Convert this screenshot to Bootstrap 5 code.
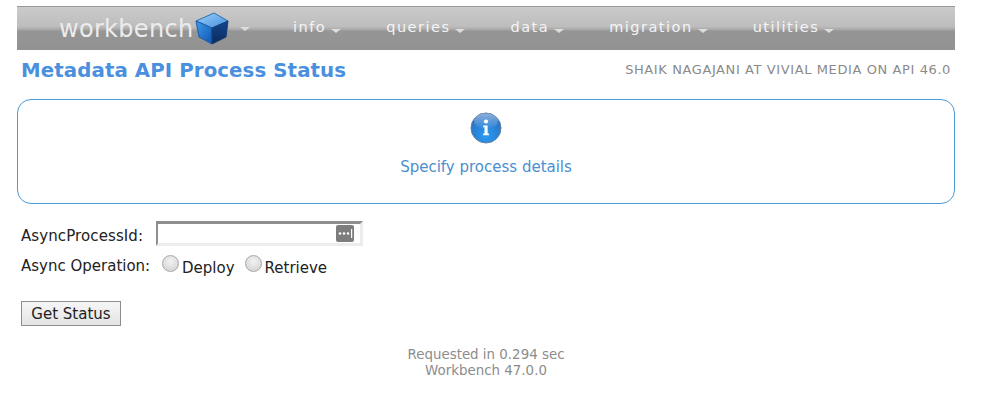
<!DOCTYPE html>
<html lang="en">
<head>
<meta charset="utf-8">
<title>Metadata API Process Status</title>
<link rel="stylesheet" href="https://cdn.jsdelivr.net/npm/bootstrap@5.3.0/dist/css/bootstrap.min.css">
<style>
body{font-family:"DejaVu Sans",Verdana,sans-serif;background:#fff;color:#222;font-size:15px;}
.page-wrap{width:938px;margin-left:17px;padding-top:6px;}
.wb-bar{height:44px;border-top:1px solid #999;background:linear-gradient(#cbcbcb 0,#bdbdbd 45%,#aaa 52%,#959595 56%,#929292 100%);color:#fff;align-items:center;}
.wb-brand{font-size:24px;letter-spacing:.3px;color:#ececec;margin-left:42px;width:135px;white-space:nowrap;line-height:1;}
.wb-cube{margin-right:10px;flex:none;}
.wb-item{font-size:14.5px;letter-spacing:1.5px;color:#f4f4f4;white-space:nowrap;position:relative;top:-1px;}
.wb-caret{display:inline-block;width:0;height:0;border-left:5px solid transparent;border-right:5px solid transparent;border-top:4px solid #ddd;margin-left:5px;vertical-align:-1px;}
.wb-caret-first{margin-left:0;}
.i-info{margin-left:43px;}.i-queries{margin-left:45px;}.i-data{margin-left:45px;}.i-mig{margin-left:45px;}.i-util{margin-left:45px;}
.head-row{height:49px;padding:0 4px 8px;align-items:center;}
.page-title{font-size:19.75px;font-weight:700;color:#4a90df;margin:0;letter-spacing:.1px;}
.user-line{font-size:13px;letter-spacing:.6px;color:#8a8a8a;text-transform:uppercase;position:relative;top:-1px;}
.msg-box{height:105px;border:1px solid #4a9ad4;border-radius:14px;padding-top:12px;text-align:center;color:#4a8fd0;font-size:15px;}
.msg-box svg{display:block;margin:0 auto 12px;}
.form-zone{padding:17px 0 0 4px;}
.lbl-a{width:135px;letter-spacing:.1px;margin:0;padding-top:5px;line-height:20px;}
.fake-input{position:relative;width:207px;height:25px;border:3px solid;border-color:#8e8e8e #ececec #ececec #8e8e8e;border-width:3px 3px 3px 2px;background:#fff;display:block;padding:0;outline:0;}
.key-btn{position:absolute;right:6px;top:1px;}
.radio-mock{appearance:none;width:17px;height:17px;border-radius:50%;border:1px solid #a8a8a8;background:radial-gradient(circle at 50% 35%,#f2f2f2,#cfcfcf);margin:0 3px 0 0;flex:none;position:relative;top:-3px;}
.lbl-b{width:141px;line-height:20px;}
.row-b{margin-top:8px;height:24px;}
.rad-item{margin-right:10px;align-items:center;}
.rad-text{position:relative;top:2px;}
.get-btn{margin-top:23px;width:100px;height:25px;padding:1px 0 0;font-size:15px;color:#222;border:1px solid #8e8e8e;border-radius:0;background:linear-gradient(#f6f6f6,#e4e4e4);display:block;}
.foot-txt{margin-top:21px;text-align:center;color:#8c8c8c;font-size:13.4px;line-height:16px;}
</style>
</head>
<body>
<div class="page-wrap">
  <nav class="wb-bar d-flex">
    <span class="wb-brand">workbench</span>
    <svg class="wb-cube" width="36" height="35" viewBox="0 0 36 35" aria-hidden="true">
      <defs>
        <linearGradient id="ct" x1="0" y1="0" x2="1" y2="1"><stop offset="0" stop-color="#9fd0f5"/><stop offset="1" stop-color="#3f8fe0"/></linearGradient>
        <linearGradient id="cl" x1="0" y1="0" x2="1" y2="1"><stop offset="0" stop-color="#3f9bea"/><stop offset="1" stop-color="#0f55b0"/></linearGradient>
        <linearGradient id="cr" x1="0" y1="0" x2="0" y2="1"><stop offset="0" stop-color="#13468f"/><stop offset="1" stop-color="#0a2a5c"/></linearGradient>
      </defs>
      <path d="M2 10 L20 2 L34 10 L18 17Z" fill="url(#ct)" stroke="#2e6fb5" stroke-width="1" stroke-linejoin="round"/>
      <path d="M2 10 L18 17 L18 33 L5 26Z" fill="url(#cl)" stroke="#1e5aa5" stroke-width="1" stroke-linejoin="round"/>
      <path d="M18 17 L34 10 L32 26 L18 33Z" fill="url(#cr)" stroke="#143d78" stroke-width="1" stroke-linejoin="round"/>
    </svg>
    <span class="wb-caret wb-caret-first"></span>
    <span class="wb-item i-info">info<span class="wb-caret"></span></span>
    <span class="wb-item i-queries">queries<span class="wb-caret"></span></span>
    <span class="wb-item i-data">data<span class="wb-caret"></span></span>
    <span class="wb-item i-mig">migration<span class="wb-caret"></span></span>
    <span class="wb-item i-util">utilities<span class="wb-caret"></span></span>
  </nav>
  <div class="head-row d-flex justify-content-between">
    <h1 class="page-title">Metadata API Process Status</h1>
    <span class="user-line">Shaik Nagajani at Vivial Media on API 46.0</span>
  </div>
  <div class="msg-box">
    <svg width="32" height="32" viewBox="0 0 32 32" aria-hidden="true">
      <defs>
        <radialGradient id="ib" cx="50%" cy="75%" r="70%"><stop offset="0" stop-color="#2a9bf5"/><stop offset="1" stop-color="#2a6fbf"/></radialGradient>
        <linearGradient id="ig" x1="0" y1="0" x2="0" y2="1"><stop offset="0" stop-color="#fff" stop-opacity=".45"/><stop offset="1" stop-color="#fff" stop-opacity=".02"/></linearGradient>
      </defs>
      <circle cx="16" cy="16" r="15" fill="url(#ib)" stroke="#5f7f9f"/>
      <ellipse cx="16" cy="9" rx="12" ry="7.5" fill="url(#ig)"/>
      <circle cx="16" cy="9.5" r="2.1" fill="#fff"/>
      <path d="M13.2 13.5h4.4v8h1.3v1.8h-5.8v-1.8h1.4v-6.2h-1.3z" fill="#fff"/>
    </svg>
    Specify process details
  </div>
  <form class="form-zone">
    <div class="d-flex align-items-center">
      <label class="lbl-a" for="pid">AsyncProcessId:</label>
      <span class="fake-input">
        <svg class="key-btn" width="18" height="17" viewBox="0 0 18 17" aria-hidden="true">
          <rect width="18" height="17" rx="2" fill="#7d7d7d"/>
          <circle cx="4" cy="8.5" r="1.3" fill="#fff"/><circle cx="8" cy="8.5" r="1.3" fill="#fff"/><circle cx="12" cy="8.5" r="1.3" fill="#fff"/>
          <rect x="15" y="4" width="1.2" height="9" fill="#fff"/>
        </svg>
      </span>
    </div>
    <div class="d-flex align-items-center row-b">
      <span class="lbl-b">Async Operation:</span>
      <label class="d-flex rad-item"><input class="radio-mock" type="radio" name="op"><span class="rad-text">Deploy</span></label>
      <label class="d-flex rad-item"><input class="radio-mock" type="radio" name="op"><span class="rad-text">Retrieve</span></label>
    </div>
    <button type="button" class="btn get-btn">Get Status</button>
  </form>
  <div class="foot-txt">Requested in 0.294 sec<br>Workbench 47.0.0</div>
</div>
<script src="https://cdn.jsdelivr.net/npm/bootstrap@5.3.0/dist/js/bootstrap.bundle.min.js"></script>
</body>
</html>
